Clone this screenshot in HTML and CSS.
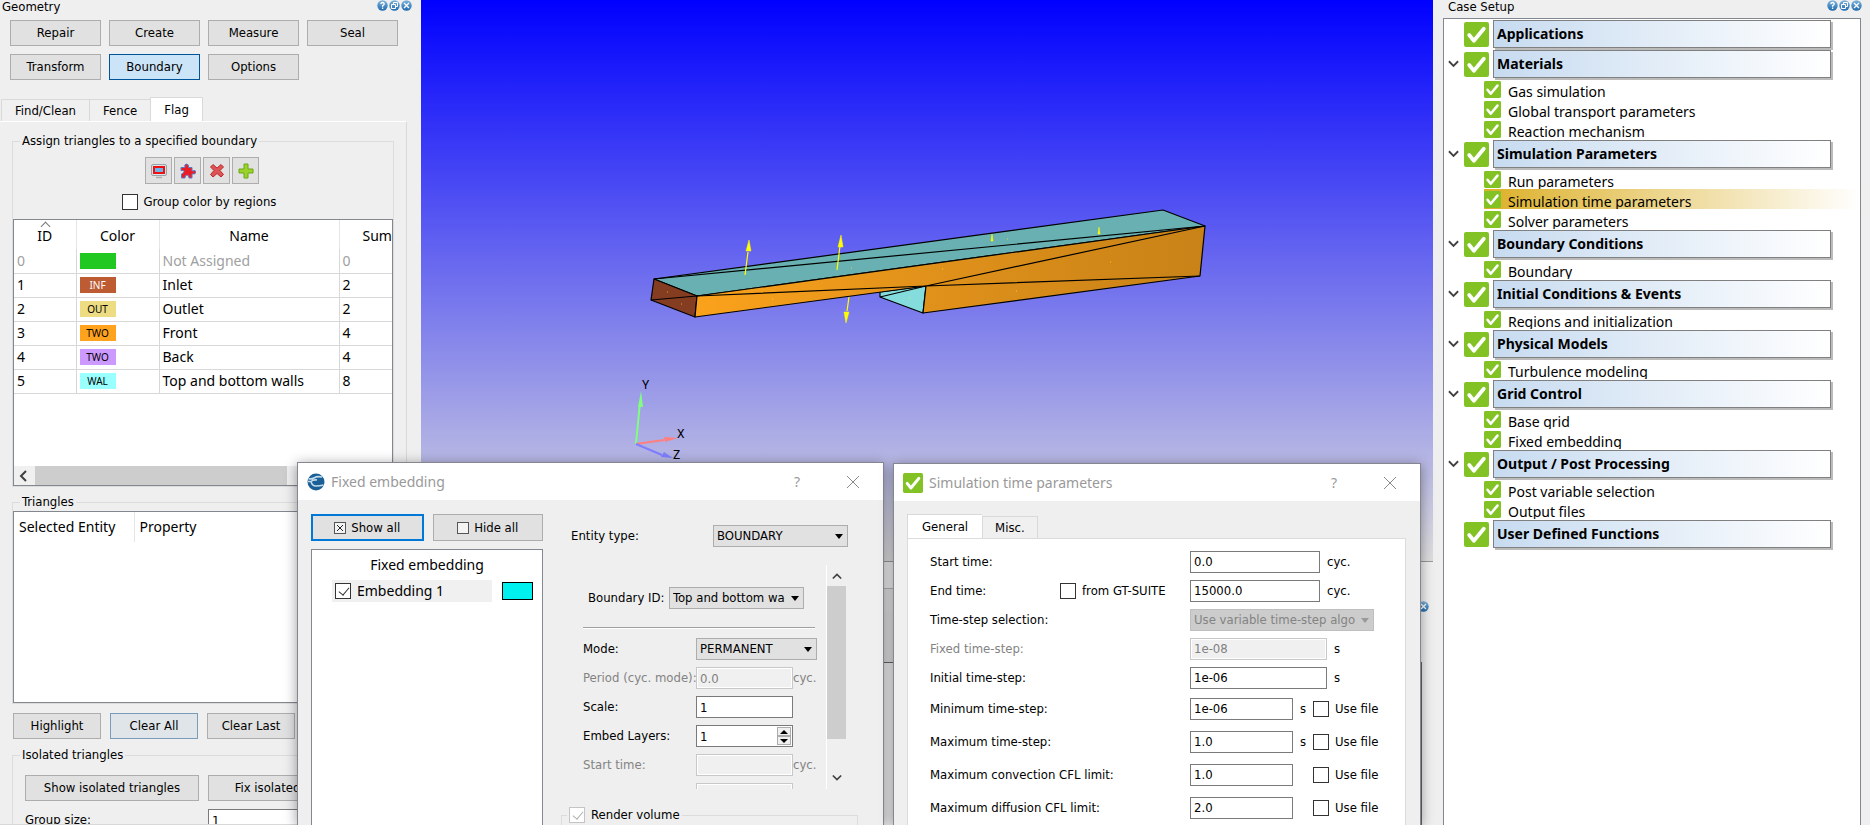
FILE: index.html
```
<!DOCTYPE html>
<html lang="en">
<head>
    <meta charset="UTF-8">
    <meta name="viewport" content="width=device-width, initial-scale=1.0">
    <title>Case Setup - Simulation time parameters</title>
    <link rel="stylesheet" href="styles.css">
</head>
<body>

    <!-- Shared icons -->
    <svg class="sprite" aria-hidden="true">
        <defs>
            <linearGradient id="blueBall" x1="0" y1="0" x2="0" y2="1">
                <stop offset="0" stop-color="#7fb4dc"/>
                <stop offset="1" stop-color="#1f6bb0"/>
            </linearGradient>
            <symbol id="check" viewBox="0 0 24 24">
                <rect width="24" height="24" rx="2" fill="#82c225"/>
                <path d="M5 12.500l4.500 5.500L19 6.500" fill="none" stroke="#fff" stroke-width="3.600" stroke-linecap="round" stroke-linejoin="round"/>
            </symbol>
            <symbol id="help" viewBox="0 0 11 11">
                <circle cx="5.500" cy="5.500" r="5.200" fill="url(#blueBall)"/>
                <path d="M3.800 4.200Q4 2.500 5.600 2.500T7.200 4.100Q7.200 5 5.600 5.600V6.700M5.600 7.600V9" fill="none" stroke="#fff" stroke-width="1.300"/>
            </symbol>
            <symbol id="float" viewBox="0 0 11 11">
                <circle cx="5.500" cy="5.500" r="5.200" fill="url(#blueBall)"/>
                <path d="M4.500 4.500V2.500H8.500V6.500H6.500M2.500 4.500H6.500V8.500H2.500Z" fill="none" stroke="#fff"/>
            </symbol>
            <symbol id="close" viewBox="0 0 11 11">
                <circle cx="5.500" cy="5.500" r="5.200" fill="url(#blueBall)"/>
                <path d="M3 3l5 5M8 3L3 8" stroke="#fff" stroke-width="1.300"/>
            </symbol>
            <symbol id="chevron" viewBox="0 0 12 8">
                <path d="M1 1l5 5 5-5" fill="none" stroke="#404040" stroke-width="2"/>
            </symbol>
            <symbol id="cross" viewBox="0 0 14 14">
                <path d="M1 1l12 12M13 1L1 13" stroke="#8a8a8a"/>
            </symbol>
        </defs>
    </svg>

    <div class="app">

        <!-- Geometry dock -->
        <aside class="dock geometry">
            <header class="dock-title">
                <h2>Geometry</h2>
                <div class="dock-tools">
                    <svg><use href="#help"/></svg>
                    <svg><use href="#float"/></svg>
                    <svg><use href="#close"/></svg>
                </div>
            </header>

            <div class="tool-grid">
                <button class="btn">Repair</button>
                <button class="btn">Create</button>
                <button class="btn">Measure</button>
                <button class="btn">Seal</button>
                <button class="btn">Transform</button>
                <button class="btn active">Boundary</button>
                <button class="btn">Options</button>
            </div>

            <div class="tabs">
                <button class="tab">Find/Clean</button>
                <button class="tab">Fence</button>
                <button class="tab selected">Flag</button>
            </div>

            <div class="tab-panel">
                <fieldset class="group assign">
                    <legend>Assign triangles to a specified boundary</legend>
                    <div class="icon-row">
                        <button class="icon-btn" aria-label="Select on screen">
                            <svg viewBox="0 0 16 16">
                                <rect x="0.500" y="1.500" width="15" height="11" rx="1.500" fill="#dce2e6" stroke="#98a2aa"/>
                                <rect x="3" y="4" width="10" height="6" fill="#6db6ea" stroke="#f01010" stroke-width="2"/>
                                <path d="M5 14.500h6" stroke="#a8b0b6" stroke-width="1.500"/>
                            </svg>
                        </button>
                        <button class="icon-btn" aria-label="Assign part">
                            <svg viewBox="0 0 16 16">
                                <path d="M1 4.500h4Q4 1 6.500 1T8.500 4.500H12V8q4-1.500 4 1t-4 2v4H9q0-3-2-3t-2 3H1.500V11Q4 10 4 8.500T1 7.500Z" fill="#ec1c24" stroke="#5b78c6"/>
                            </svg>
                        </button>
                        <button class="icon-btn" aria-label="Remove">
                            <svg viewBox="0 0 16 16">
                                <path d="M4 1.500l4 3.500 4-3.500 2.500 2.500L11 7.500l3.500 4L12 14 8 10.500 4 14l-2.500-2.500L5 7.500 1.500 4Z" fill="#dc5455" stroke="#b92c2e" stroke-linejoin="round"/>
                            </svg>
                        </button>
                        <button class="icon-btn" aria-label="Add">
                            <svg viewBox="0 0 16 16">
                                <path d="M6 1h4v5h5v4h-5v5H6v-5H1V6h5Z" fill="#9bd32a" stroke="#6da615"/>
                            </svg>
                        </button>
                    </div>
                    <label class="check-label centered"><input type="checkbox"> Group color by regions</label>

                    <div class="table-box">
                        <table class="boundaries">
                            <colgroup><col class="c-id"><col class="c-color"><col class="c-name"><col></colgroup>
                            <thead>
                                <tr><th class="sorted">ID</th><th>Color</th><th>Name</th><th>Sum</th></tr>
                            </thead>
                            <tbody>
                                <tr class="muted"><td>0</td><td><span class="chip green"></span></td><td>Not Assigned</td><td>0</td></tr>
                                <tr><td>1</td><td><span class="chip inflow">INF</span></td><td>Inlet</td><td>2</td></tr>
                                <tr><td>2</td><td><span class="chip outflow">OUT</span></td><td>Outlet</td><td>2</td></tr>
                                <tr><td>3</td><td><span class="chip front">TWO</span></td><td>Front</td><td>4</td></tr>
                                <tr><td>4</td><td><span class="chip back">TWO</span></td><td>Back</td><td>4</td></tr>
                                <tr><td>5</td><td><span class="chip wall">WAL</span></td><td>Top and bottom walls</td><td>8</td></tr>
                            </tbody>
                        </table>
                        <div class="hscroll">
                            <svg class="arrow-left"><use href="#chevron"/></svg>
                            <div class="hthumb"></div>
                        </div>
                    </div>
                </fieldset>

                <fieldset class="group triangles">
                    <legend>Triangles</legend>
                    <div class="table-box">
                        <table class="entities">
                            <thead>
                                <tr><th>Selected Entity</th><th>Property</th></tr>
                            </thead>
                        </table>
                    </div>
                </fieldset>

                <div class="btn-row">
                    <button class="btn">Highlight</button>
                    <button class="btn hovered">Clear All</button>
                    <button class="btn">Clear Last</button>
                    <button class="btn">Clear</button>
                </div>

                <fieldset class="group isolated">
                    <legend>Isolated triangles</legend>
                    <div class="isolated-grid">
                        <button class="btn">Show isolated triangles</button>
                        <button class="btn">Fix isolated triangles</button>
                        <label for="groupSize">Group size:</label>
                        <input class="field" type="text" id="groupSize" value="1">
                    </div>
                </fieldset>
            </div>
        </aside>

        <!-- 3D view and the log dock below it -->
        <main class="center">
            <div class="viewport">
                <svg viewBox="421 0 1012 561" role="img" aria-label="Channel geometry">
                    <defs>
                        <linearGradient id="orange" x1="0" y1="0" x2="1" y2="0">
                            <stop offset="0" stop-color="#fba21c"/>
                            <stop offset="0.500" stop-color="#de901a"/>
                            <stop offset="1" stop-color="#c88217"/>
                        </linearGradient>
                    </defs>
                    <g stroke="#000" stroke-width="1.200" stroke-linejoin="round">
                        <path d="M654 279L1163 210L1205 226L697 296Z" fill="#68b0b1"/>
                        <path d="M654 279L697 296L695 317L651 300Z" fill="#853d22"/>
                        <path d="M880 292L926 286L923 313L880 297Z" fill="#84dcdc"/>
                        <path d="M697 296L1205 226L1200 276L923 313L926 286L695 317Z" fill="url(#orange)"/>
                        <path d="M654 279L1205 226M697 296L926 286L1205 226M926 286L1200 276M651 300L697 296M880 297L926 286" fill="none"/>
                    </g>
                    <g stroke="#ff0" stroke-width="1.200" fill="#ff0">
                        <path d="M745 275L748 252M837 270L840 246M849 297L847 311"/>
                        <path d="M749 240l2 11h-5zM841 235l2 12h-5zM846 323l-2-11h5zM992 234l1 7h-2zM1099 227l1 7h-2z" stroke-width="0.500"/>
                        <path d="M667 292h1M681 304h1M772 299h1M851 268h1M942 269h1M1007 239h1M909 298h1M1016 291h1M1110 262h1" stroke-width="1" opacity="0.600"/>
                    </g>
                    <path d="M636 444L640 402" stroke="#7fff7f" stroke-width="2"/>
                    <path d="M641 391l2 16h-5z" fill="#7fff7f"/>
                    <path d="M636 444L664 440" stroke="#ff7f7f" stroke-width="2"/>
                    <path d="M678 438l-14-1 1 5z" fill="#ff7f7f"/>
                    <path d="M636 444L662 455" stroke="#7f7fff" stroke-width="2"/>
                    <path d="M673 458l-9-6-3 5z" fill="#7f7fff"/>
                    <text x="642" y="389">Y</text>
                    <text x="677" y="438">X</text>
                    <text x="673" y="459">Z</text>
                </svg>
            </div>
            <div class="log-dock">
                <div class="log-title"><svg><use href="#close"/></svg></div>
                <div class="log-bar"></div>
                <div class="log-body"></div>
            </div>
        </main>

        <!-- Case setup dock -->
        <aside class="dock case">
            <header class="dock-title">
                <h2>Case Setup</h2>
                <div class="dock-tools">
                    <svg><use href="#help"/></svg>
                    <svg><use href="#float"/></svg>
                    <svg><use href="#close"/></svg>
                </div>
            </header>
            <div class="tree">
                <div class="node"><span class="twist"></span><svg class="ok"><use href="#check"/></svg><span class="node-box">Applications</span></div>

                <div class="node"><svg class="twist"><use href="#chevron"/></svg><svg class="ok"><use href="#check"/></svg><span class="node-box">Materials</span></div>
                <div class="leaf"><svg><use href="#check"/></svg><span>Gas simulation</span></div>
                <div class="leaf"><svg><use href="#check"/></svg><span>Global transport parameters</span></div>
                <div class="leaf"><svg><use href="#check"/></svg><span>Reaction mechanism</span></div>

                <div class="node"><svg class="twist"><use href="#chevron"/></svg><svg class="ok"><use href="#check"/></svg><span class="node-box">Simulation Parameters</span></div>
                <div class="leaf"><svg><use href="#check"/></svg><span>Run parameters</span></div>
                <div class="leaf current"><svg><use href="#check"/></svg><span>Simulation time parameters</span></div>
                <div class="leaf"><svg><use href="#check"/></svg><span>Solver parameters</span></div>

                <div class="node"><svg class="twist"><use href="#chevron"/></svg><svg class="ok"><use href="#check"/></svg><span class="node-box">Boundary Conditions</span></div>
                <div class="leaf"><svg><use href="#check"/></svg><span>Boundary</span></div>

                <div class="node"><svg class="twist"><use href="#chevron"/></svg><svg class="ok"><use href="#check"/></svg><span class="node-box">Initial Conditions &amp; Events</span></div>
                <div class="leaf"><svg><use href="#check"/></svg><span>Regions and initialization</span></div>

                <div class="node"><svg class="twist"><use href="#chevron"/></svg><svg class="ok"><use href="#check"/></svg><span class="node-box">Physical Models</span></div>
                <div class="leaf"><svg><use href="#check"/></svg><span>Turbulence modeling</span></div>

                <div class="node"><svg class="twist"><use href="#chevron"/></svg><svg class="ok"><use href="#check"/></svg><span class="node-box">Grid Control</span></div>
                <div class="leaf"><svg><use href="#check"/></svg><span>Base grid</span></div>
                <div class="leaf"><svg><use href="#check"/></svg><span>Fixed embedding</span></div>

                <div class="node"><svg class="twist"><use href="#chevron"/></svg><svg class="ok"><use href="#check"/></svg><span class="node-box">Output / Post Processing</span></div>
                <div class="leaf"><svg><use href="#check"/></svg><span>Post variable selection</span></div>
                <div class="leaf"><svg><use href="#check"/></svg><span>Output files</span></div>

                <div class="node"><span class="twist"></span><svg class="ok"><use href="#check"/></svg><span class="node-box">User Defined Functions</span></div>
            </div>
        </aside>
    </div>

    <!-- Fixed embedding window -->
    <section class="dialog embedding">
        <header class="dialog-title">
            <svg class="app-icon" viewBox="0 0 18 18">
                <circle cx="9" cy="9" r="8.500" fill="#1b5f97"/>
                <path d="M1.500 6Q6 6 8 4.500T15 4M1 8.500h3Q5 13 9 13T16.500 12M4 8.500Q6 6.500 10 7" fill="none" stroke="#c3dcec" stroke-width="1.600"/>
            </svg>
            <h2>Fixed embedding</h2>
            <span class="help">?</span>
            <svg class="close"><use href="#cross"/></svg>
        </header>
        <div class="dialog-body embedding-body">
            <div class="embedding-left">
                <div class="show-row">
                    <button class="btn focused"><svg viewBox="0 0 12 12"><rect x="0.500" y="0.500" width="11" height="11" fill="#f4f4f4" stroke="#555"/><path d="M3 3l6 6M9 3L3 9" stroke="#222"/></svg>Show all</button>
                    <button class="btn"><svg viewBox="0 0 12 12"><rect x="0.500" y="0.500" width="11" height="11" fill="#f4f4f4" stroke="#555"/></svg>Hide all</button>
                </div>
                <div class="embed-list">
                    <h3>Fixed embedding</h3>
                    <div class="embed-item">
                        <label class="check-label"><input type="checkbox" checked> Embedding 1</label>
                        <span class="swatch"></span>
                    </div>
                </div>
            </div>
            <div class="embedding-right">
                <div class="entity-row">
                    <label for="entityType">Entity type:</label>
                    <span class="select"><select id="entityType"><option>BOUNDARY</option></select></span>
                </div>
                <div class="scroll-area">
                    <div class="scroll-content">
                        <div class="boundary-row">
                            <label for="boundaryId">Boundary ID:</label>
                            <span class="select"><select id="boundaryId"><option>Top and bottom walls</option></select></span>
                        </div>
                        <hr>
                        <div class="embed-form">
                            <label for="mode">Mode:</label>
                            <span class="select"><select id="mode"><option>PERMANENT</option></select></span>

                            <label class="off" for="period">Period (cyc. mode):</label>
                            <div class="with-unit off"><input class="field" type="text" id="period" value="0.0" disabled>cyc.</div>

                            <label for="scale">Scale:</label>
                            <div class="with-unit"><input class="field" type="text" id="scale" value="1"></div>

                            <label for="layers">Embed Layers:</label>
                            <div class="with-unit spin">
                                <input class="field" type="text" id="layers" value="1">
                                <span class="spinner"><button class="up" aria-label="More"></button><button class="down" aria-label="Fewer"></button></span>
                            </div>

                            <label class="off" for="embedStart">Start time:</label>
                            <div class="with-unit off"><input class="field" type="text" id="embedStart" disabled>cyc.</div>

                            <input class="field next-field" type="text" aria-label="End time" disabled>
                        </div>
                    </div>
                    <div class="vscroll">
                        <svg class="arrow-up"><use href="#chevron"/></svg>
                        <div class="vthumb"></div>
                        <svg><use href="#chevron"/></svg>
                    </div>
                </div>
                <fieldset class="group render">
                    <legend><label class="check-label"><input type="checkbox" checked disabled> Render volume</label></legend>
                </fieldset>
            </div>
        </div>
    </section>

    <!-- Simulation time parameters window -->
    <section class="dialog simtime">
        <header class="dialog-title">
            <svg class="app-icon"><use href="#check"/></svg>
            <h2>Simulation time parameters</h2>
            <span class="help">?</span>
            <svg class="close"><use href="#cross"/></svg>
        </header>
        <div class="dialog-body">
            <div class="tabs">
                <button class="tab selected">General</button>
                <button class="tab">Misc.</button>
            </div>
            <form class="time-form">
                <div class="time-row">
                    <label for="startTime">Start time:</label>
                    <div class="controls"><input class="field wide" type="text" id="startTime" value="0.0">cyc.</div>
                </div>
                <div class="time-row">
                    <label for="endTime">End time:</label>
                    <label class="check-label"><input type="checkbox"> from GT-SUITE</label>
                    <div class="controls"><input class="field wide" type="text" id="endTime" value="15000.0">cyc.</div>
                </div>
                <div class="time-row">
                    <label for="stepSelection">Time-step selection:</label>
                    <div class="controls"><span class="select disabled"><select id="stepSelection" disabled><option>Use variable time-step algorithm</option></select></span></div>
                </div>
                <div class="time-row">
                    <label class="off" for="fixedStep">Fixed time-step:</label>
                    <div class="controls"><input class="field wider" type="text" id="fixedStep" value="1e-08" disabled>s</div>
                </div>
                <div class="time-row">
                    <label for="initialStep">Initial time-step:</label>
                    <div class="controls"><input class="field wider" type="text" id="initialStep" value="1e-06">s</div>
                </div>
                <div class="time-row tall">
                    <label for="minStep">Minimum time-step:</label>
                    <div class="controls"><input class="field" type="text" id="minStep" value="1e-06"><span class="unit">s</span><label class="check-label"><input type="checkbox"> Use file</label></div>
                </div>
                <div class="time-row tall">
                    <label for="maxStep">Maximum time-step:</label>
                    <div class="controls"><input class="field" type="text" id="maxStep" value="1.0"><span class="unit">s</span><label class="check-label"><input type="checkbox"> Use file</label></div>
                </div>
                <div class="time-row tall">
                    <label for="convection">Maximum convection CFL limit:</label>
                    <div class="controls"><input class="field" type="text" id="convection" value="1.0"><span class="unit"></span><label class="check-label"><input type="checkbox"> Use file</label></div>
                </div>
                <div class="time-row tall">
                    <label for="diffusion">Maximum diffusion CFL limit:</label>
                    <div class="controls"><input class="field" type="text" id="diffusion" value="2.0"><span class="unit"></span><label class="check-label"><input type="checkbox"> Use file</label></div>
                </div>
            </form>
        </div>
    </section>

</body>
</html>
```
FILE: styles.css
```
* {
    box-sizing: border-box;
}

body {
    margin: 0;
    height: 100vh;
    overflow: hidden;
    position: relative;
    background-color: #efefef;
    color: #000;
    font-family: "DejaVu Sans Condensed", "Noto Sans", sans-serif;
    font-size: 13px;
    line-height: 16px;
}

h2, h3 {
    margin: 0;
    font-size: inherit;
    font-weight: normal;
}

svg {
    display: block;
    flex: none;
}

.sprite {
    position: absolute;
    width: 0;
    height: 0;
}

.app {
    display: grid;
    grid-template-columns: 421px minmax(0, 1fr) 437px;
    grid-template-rows: 100%;
    height: 100%;
}

/* Buttons and fields */

button, input, select {
    font: inherit;
    color: inherit;
    margin: 0;
}

.btn {
    height: 26px;
    padding: 0 4px;
    border: 1px solid #adadad;
    background-color: #e1e1e1;
    white-space: nowrap;
    overflow: hidden;
}

.btn.active {
    background-color: #cce4f7;
    border-color: #005499;
}

.btn.hovered {
    background-color: #e0e5e9;
    border-color: #7a9cb8;
}

.btn.focused {
    border: 2px solid #0078d7;
}

.field {
    width: 97px;
    height: 22px;
    padding: 0 3px;
    border: 1px solid #7a7a7a;
    background-color: #fff;
}

.field:disabled {
    border-color: #c8c8c8;
    background-color: #f0f0f0;
    color: #808080;
    box-shadow: inset 0 0 0 1px #fff;
}

.off {
    color: #838383;
}

input[type="checkbox"] {
    appearance: none;
    flex: none;
    width: 16px;
    height: 16px;
    border: 1px solid #333;
    background-color: #fff;
}

input[type="checkbox"]:checked::after {
    content: "";
    display: block;
    width: 5px;
    height: 9px;
    margin: 1px 0 0 5px;
    border: solid #333;
    border-width: 0 1px 1px 0;
    transform: rotate(40deg);
}

input[type="checkbox"]:disabled {
    border-color: #c4c4c4;
}

input[type="checkbox"]:disabled::after {
    border-color: #b0b0b0;
}

.check-label {
    display: flex;
    align-items: center;
    gap: 6px;
    white-space: nowrap;
}

.check-label.centered {
    justify-content: center;
    padding-right: 8px;
}

.select {
    position: relative;
    display: block;
}

.select select {
    appearance: none;
    display: block;
    width: 100%;
    height: 22px;
    padding: 0 18px 0 3px;
    border: 1px solid #adadad;
    border-radius: 0;
    background-color: #e1e1e1;
    overflow: hidden;
}

.select::after {
    content: "";
    position: absolute;
    top: 9px;
    right: 5px;
    border: 4px solid transparent;
    border-top: 5px solid #000;
    border-bottom: 0;
}

.select.disabled select {
    background-color: #ccc;
    border-color: #bfbfbf;
    color: #838383;
    opacity: 1;
}

.select.disabled::after {
    border-top-color: #999;
}

.group {
    min-width: 0;
    margin: 0;
    padding: 0;
    border: 1px solid #dcdcdc;
}

.group legend {
    margin-left: 7px;
    padding: 0 2px;
}

/* Docks */

.dock {
    display: flex;
    flex-direction: column;
    min-width: 0;
    overflow: hidden;
}

.dock-title {
    display: flex;
    justify-content: space-between;
    flex: none;
    height: 18px;
    line-height: 14px;
}

.dock-tools {
    display: flex;
    gap: 1px;
}

.dock-tools svg {
    width: 11px;
    height: 11px;
}

.geometry .dock-title {
    padding: 0 9px 0 2px;
}

.case .dock-title {
    padding: 0 8px 0 15px;
}

.tool-grid {
    display: grid;
    grid-template-columns: repeat(4, 1fr);
    gap: 8px;
    padding: 2px 23px 0 10px;
}

.tabs {
    display: flex;
    align-items: flex-end;
    height: 24px;
}

.tab {
    height: 22px;
    padding: 0 12px;
    border: 1px solid #d9d9d9;
    border-bottom: 0;
    border-right: 0;
    background-color: #f0f0f0;
}

.tab:last-child {
    border-right: 1px solid #d9d9d9;
}

.tab.selected {
    height: 24px;
    padding: 0 14px;
    background-color: #fff;
}

.geometry .tabs {
    margin-top: 17px;
    padding-left: 1px;
}

.geometry .tab {
    padding: 0 13px;
}

.tab-panel {
    flex: 1;
    min-height: 0;
    width: 407px;
    padding: 11px 12px 0 12px;
    border: 1px solid #d9d9d9;
    border-left: 0;
    border-top-color: #fff;
    overflow: hidden;
}

.icon-row {
    display: flex;
    justify-content: center;
    gap: 2px;
    margin: 8px 0 10px;
    padding-right: 2px;
}

.icon-btn {
    display: flex;
    align-items: center;
    justify-content: center;
    width: 27px;
    height: 27px;
    padding: 0;
    border: 1px solid #adadad;
    background-color: #e1e1e1;
}

.icon-btn svg {
    width: 16px;
    height: 16px;
}

.table-box {
    display: flex;
    flex-direction: column;
    justify-content: space-between;
    overflow: hidden;
    border: 1px solid #828790;
    background-color: #fff;
    font-family: "Noto Sans", sans-serif;
    font-size: 14px;
}

.assign {
    height: 354px;
}

.assign .table-box {
    height: 267px;
    margin-top: 9px;
}

.boundaries {
    width: 402px;
    table-layout: fixed;
    border-collapse: collapse;
}

.c-id { width: 62px; }
.c-color { width: 83px; }
.c-name { width: 180px; }

.boundaries th {
    position: relative;
    height: 29px;
    padding: 2px 0 0;
    border-right: 1px solid #e5e5e5;
    font-weight: normal;
}

.boundaries .sorted::before {
    content: "";
    position: absolute;
    top: 3px;
    left: 28px;
    width: 6px;
    height: 6px;
    border: solid #777;
    border-width: 1px 0 0 1px;
    transform: rotate(45deg);
}

.boundaries td {
    height: 24px;
    padding: 0 3px;
    border-right: 1px solid #d8d8d8;
    border-bottom: 1px solid #d8d8d8;
}

.muted {
    color: #a0a0a0;
}

.chip {
    display: block;
    width: 36px;
    height: 16px;
    font-size: 10px;
    line-height: 16px;
    text-align: center;
}

.chip.green { background-color: #22c822; }
.chip.inflow { background-color: #bd5b32; color: #fff; }
.chip.outflow { background-color: #eddc82; }
.chip.front { background-color: #ffa31e; }
.chip.back { background-color: #cc99ff; }
.chip.wall { background-color: #99ffff; }

.hscroll {
    display: flex;
    height: 19px;
    background-color: #f0f0f0;
}

.arrow-left {
    width: 12px;
    height: 8px;
    margin: 6px 6px 0 3px;
    transform: rotate(90deg);
}

.hthumb {
    width: 252px;
    background-color: #cdcdcd;
}

.triangles {
    margin-top: 7px;
}

.triangles .table-box {
    height: 192px;
    margin-top: 1px;
}

.entities {
    width: 100%;
    border-collapse: collapse;
}

.entities th {
    height: 30px;
    padding: 0 5px;
    font-weight: normal;
    text-align: left;
}

.entities th:first-child {
    width: 120px;
    border-right: 1px solid #e5e5e5;
}

.btn-row {
    display: grid;
    grid-template-columns: repeat(4, 88px);
    gap: 9px;
    margin: 9px 0 8px 1px;
}

.isolated {
    height: 120px;
}

.isolated-grid {
    display: grid;
    grid-template-columns: 174px 174px;
    gap: 8px 9px;
    padding: 12px 12px 0;
}

.isolated-grid label {
    padding-top: 3px;
}

.isolated-grid .field {
    width: 100%;
}

/* Center */

.center {
    display: flex;
    flex-direction: column;
}

.viewport {
    flex: none;
    height: 562px;
    border-bottom: 1px solid #999;
    background: linear-gradient(#0000ff, #dedede);
}

.viewport svg {
    width: 100%;
    height: 561px;
}

.viewport text {
    font-family: Roboto, sans-serif;
    font-size: 12px;
}

.log-dock {
    flex: 1;
    display: flex;
    flex-direction: column;
}

.log-title {
    display: flex;
    justify-content: flex-end;
    align-items: flex-end;
    height: 50px;
    padding: 0 4px;
    background: linear-gradient(#efefef 52%, #b5b5b5 52%, #b5b5b5 54%, #e2e2e2 54%) no-repeat left / calc(100% - 20px) 100%;
}

.log-title svg {
    width: 11px;
    height: 11px;
}

.log-bar {
    height: 50px;
    margin-right: 13px;
    background-color: #e0e0e0;
}

.log-body {
    flex: 1;
    margin-right: 11px;
    border: 1px solid #666;
    border-bottom: 0;
    border-left: 0;
}

/* Case setup tree */

.tree {
    flex: 1;
    margin: 0 9px 0 10px;
    border: 1px solid #828790;
    border-bottom: 0;
    background-color: #fff;
    font-family: "Noto Sans", sans-serif;
    font-size: 14px;
}

.node {
    display: flex;
    align-items: center;
    height: 30px;
    padding: 0 29px 0 4px;
}

.twist {
    width: 11px;
    height: 8px;
    margin-right: 5px;
}

.ok {
    width: 25px;
    height: 25px;
    margin-right: 4px;
}

.node-box {
    flex: 1;
    height: 28px;
    padding-left: 3px;
    border: 1px solid #808080;
    background: linear-gradient(90deg, #c7dbf0, #fff);
    box-shadow: 2px 2px 0 #bbb;
    font-weight: bold;
    line-height: 25px;
}

.leaf {
    display: flex;
    gap: 7px;
    height: 20px;
    margin-left: 40px;
    overflow: hidden;
    line-height: 26px;
}

.leaf svg {
    width: 17px;
    height: 17px;
    margin-top: 2px;
}

.leaf.current {
    background: linear-gradient(90deg, #dcb028, #fff);
}

/* Dialog windows */

.dialog {
    position: absolute;
    bottom: 0;
    display: flex;
    flex-direction: column;
    overflow: hidden;
    border: 1px solid #868690;
    border-bottom: 0;
    background-color: #efefef;
    box-shadow: 0 2px 12px rgba(0, 0, 0, 0.4);
}

.embedding {
    left: 297px;
    top: 462px;
    width: 587px;
}

.simtime {
    left: 893px;
    top: 463px;
    width: 528px;
}

.dialog-title {
    display: flex;
    align-items: center;
    flex: none;
    height: 37px;
    padding: 0 23px 0 9px;
    background-color: #fff;
    color: #999;
    font-family: "Noto Sans", sans-serif;
    font-size: 14px;
}

.dialog-title h2 {
    flex: 1;
    margin-left: 6px;
}

.app-icon {
    width: 18px;
    height: 18px;
}

.simtime .app-icon {
    width: 20px;
    height: 20px;
}

.help {
    margin-right: 46px;
}

.close {
    width: 14px;
    height: 14px;
}

.dialog-body {
    flex: 1;
    min-height: 0;
    padding: 14px 14px 0 13px;
}

.embedding-body {
    display: flex;
    justify-content: space-between;
    padding-right: 25px;
}

.embedding-left {
    display: flex;
    flex-direction: column;
    width: 232px;
}

.show-row {
    display: flex;
    gap: 9px;
}

.show-row .btn {
    display: flex;
    flex: 1;
    align-items: center;
    justify-content: center;
    gap: 5px;
    height: 27px;
}

.show-row svg {
    width: 12px;
    height: 12px;
}

.embed-list {
    flex: 1;
    margin-top: 8px;
    border: 1px solid #828790;
    border-bottom: 0;
    background-color: #fff;
    font-family: "Noto Sans", sans-serif;
    font-size: 14px;
}

.embed-list h3 {
    line-height: 30px;
    text-align: center;
}

.embed-item {
    display: flex;
    align-items: center;
    justify-content: space-between;
    padding: 0 9px 0 20px;
}

.embed-item .check-label {
    width: 160px;
    height: 22px;
    padding-left: 3px;
    background-color: #f0f0f0;
}

.swatch {
    width: 31px;
    height: 18px;
    border: 1px solid #000;
    background-color: #00f0f0;
}

.embedding-right {
    width: 297px;
}

.entity-row {
    display: flex;
    align-items: center;
    justify-content: space-between;
    margin-top: 11px;
    padding: 0 10px;
}

.entity-row .select, .boundary-row .select {
    width: 135px;
}

.scroll-area {
    display: flex;
    justify-content: space-between;
    height: 224px;
    margin-top: 18px;
    padding: 0 12px 0 22px;
    overflow: hidden;
}

.scroll-content {
    width: 232px;
}

.boundary-row {
    display: flex;
    align-items: center;
    justify-content: space-between;
    padding: 22px 11px 18px 5px;
}

hr {
    margin: 0 0 9px;
    border: 0;
    border-top: 1px solid #a0a0a0;
    border-bottom: 1px solid #fff;
}

.embed-form {
    display: grid;
    grid-template-columns: 113px 1fr;
    grid-auto-rows: 22px;
    gap: 7px 0;
    align-items: center;
    white-space: nowrap;
}

.next-field {
    grid-column: 2;
}

.with-unit {
    display: flex;
    align-items: center;
}

.spin {
    position: relative;
}

.spinner {
    position: absolute;
    top: 2px;
    left: 81px;
    display: flex;
    flex-direction: column;
}

.spinner button {
    display: flex;
    align-items: center;
    justify-content: center;
    width: 14px;
    height: 9px;
    padding: 0;
    border: 1px solid #adadad;
    background-color: #f0f0f0;
}

.spinner button::after {
    content: "";
    border: 4px solid transparent;
    border-top: 0;
    border-bottom: 4px solid #000;
}

.spinner .down::after {
    border-bottom: 0;
    border-top: 4px solid #000;
}

.vscroll {
    display: flex;
    flex-direction: column;
    align-items: center;
    width: 20px;
    padding: 7px 0;
    border-left: 1px solid #fff;
}

.vscroll svg {
    width: 10px;
    height: 8px;
}

.arrow-up {
    transform: rotate(180deg);
}

.vthumb {
    width: 19px;
    height: 155px;
    margin: 6px 0 35px;
    background-color: #cdcdcd;
}

.render {
    height: 30px;
    margin-top: 18px;
    border-bottom: 0;
}

.render legend {
    margin-left: 5px;
}

/* Simulation time form */

.simtime .dialog-body {
    display: flex;
    flex-direction: column;
    padding-top: 13px;
}

.time-form {
    flex: 1;
    padding: 8px 22px 0;
    border: 1px solid #dcdcdc;
    border-bottom: 0;
    background-color: #fff;
}

.time-row {
    display: grid;
    grid-template-columns: 130px 130px 1fr;
    align-items: center;
    height: 29px;
    white-space: nowrap;
}

.time-row > label:first-child {
    grid-column: 1;
}

.time-row.tall {
    height: 33px;
}

.controls {
    grid-column: 3;
    display: flex;
    align-items: center;
    gap: 7px;
}

.controls .field {
    width: 103px;
}

.controls .wide {
    width: 130px;
}

.controls .wider {
    width: 137px;
}

.controls .select {
    width: 184px;
}

.controls .unit {
    width: 6px;
}
```
